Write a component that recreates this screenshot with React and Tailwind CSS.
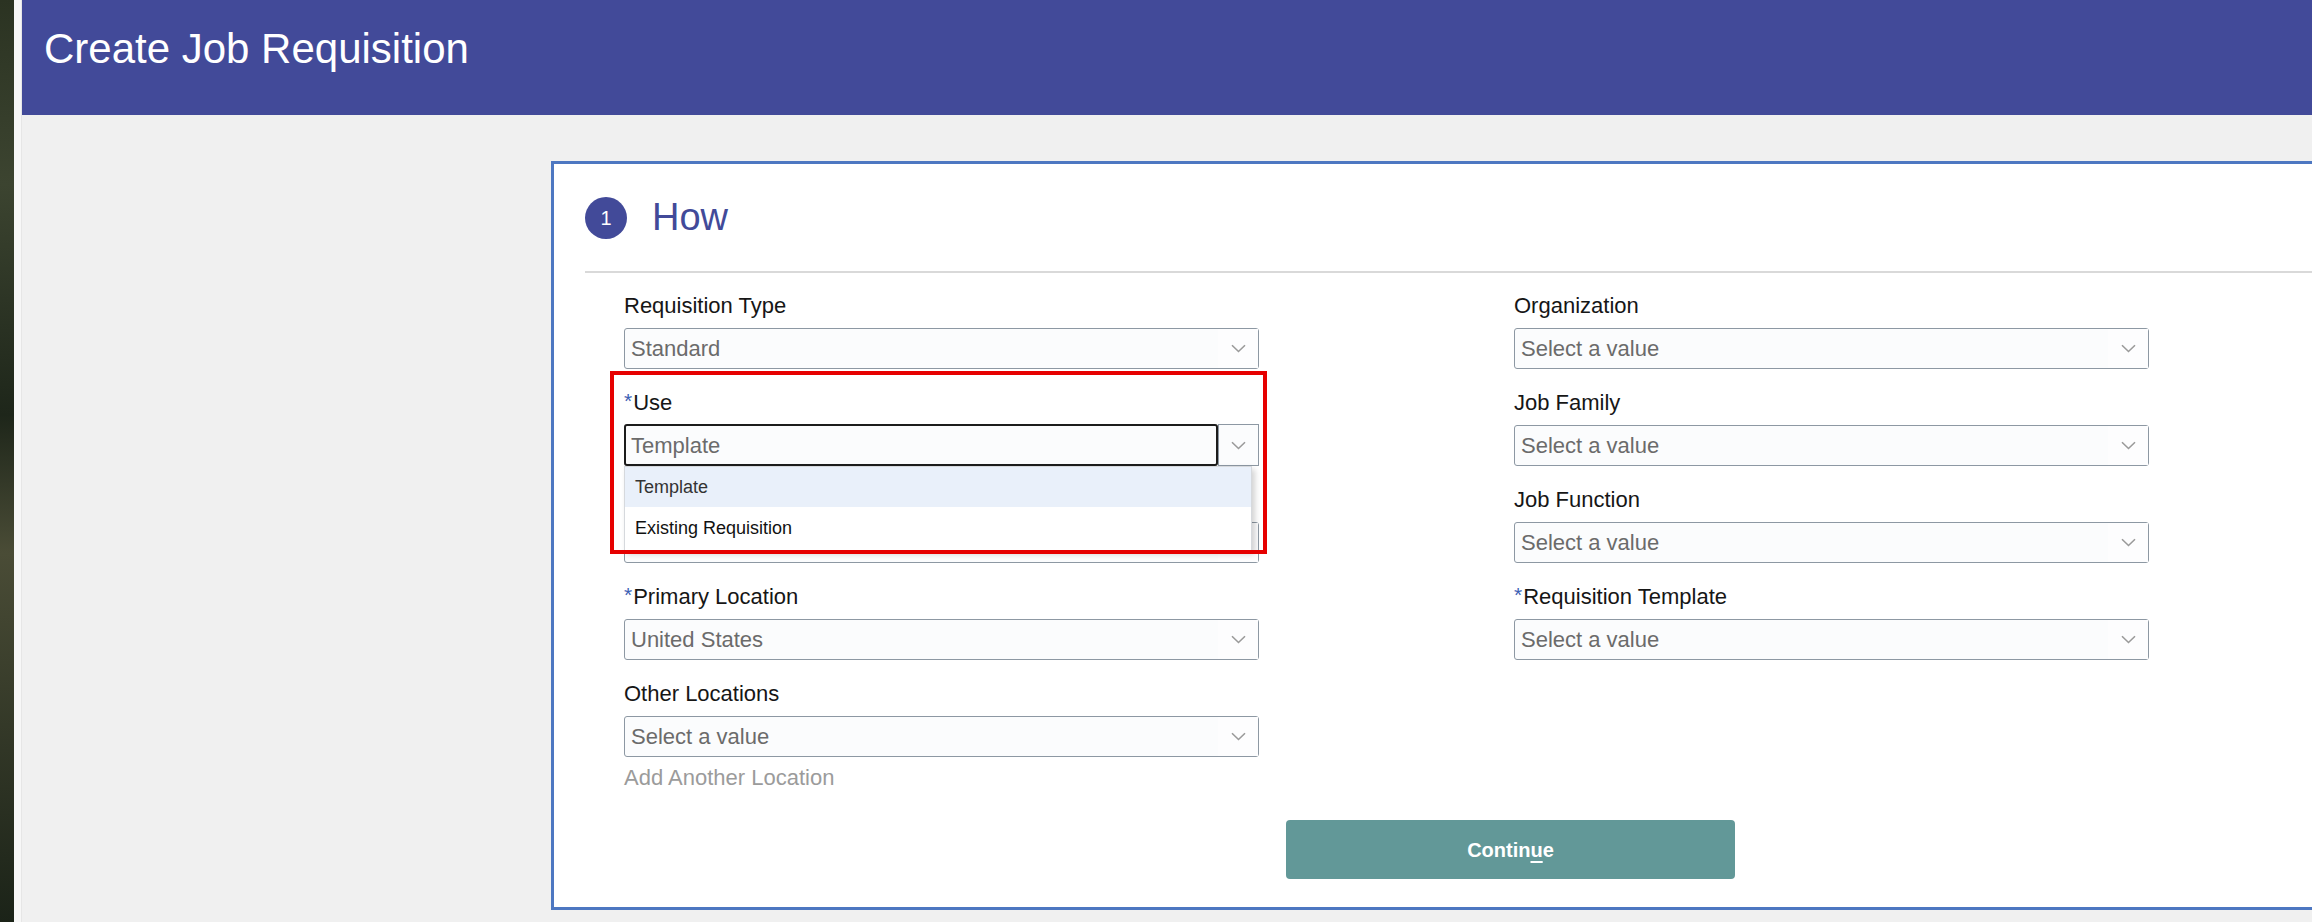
import React from "react";

const FONT = { fontFamily: '"Liberation Sans", Arial, sans-serif' };

function Chevron() {
  return (
    <svg width="15" height="9" viewBox="0 0 15 9" fill="none">
      <path d="M1 1.2L7.5 7.5L14 1.2" stroke="#9a9a9a" strokeWidth="1.6" />
    </svg>
  );
}

function Label({ text, required }) {
  return (
    <div className="h-[28px] flex items-center text-[22px] text-[#161616] leading-none">
      {required && <span className="text-[#3d5fb4] text-[21px] self-start mt-[1px] mr-[1px]">*</span>}
      {text}
    </div>
  );
}

function Select({ value }) {
  return (
    <div className="mt-[8px] h-[41px] w-[635px] flex items-center justify-between border border-[#8d98a3] rounded-[3px] bg-[#fbfcfd]">
      <span className="pl-[6px] text-[22px] text-[#6b6b6b]">{value}</span>
      <span className="h-full w-[40px] flex items-center justify-center bg-[#fdfdfe]">
        <Chevron />
      </span>
    </div>
  );
}

function Field({ label, required, value }) {
  return (
    <div className="flex flex-col">
      <Label text={label} required={required} />
      <Select value={value} />
    </div>
  );
}

function UseField() {
  return (
    <div className="relative flex flex-col">
      <Label text="Use" required />
      <div className="mt-[7px] h-[42px] w-[635px] flex">
        <div className="flex-1 flex items-center border-2 border-[#1c1c1c] rounded-[3px] bg-[#fbfcfd]">
          <span className="pl-[5px] text-[22px] text-[#6b6b6b]">Template</span>
        </div>
        <div className="w-[41px] flex items-center justify-center border border-[#8d98a3] bg-[#fbfcfd]">
          <Chevron />
        </div>
      </div>
      {/* open list */}
      <div className="absolute left-0 top-[77px] w-[628px] z-20 bg-white border border-[#d6d9dd] shadow-[3px_3px_6px_rgba(0,0,0,0.18)]">
        <div className="h-[40px] flex items-center pl-[10px] bg-[#e9f0fa] text-[18px] text-[#333]">Template</div>
        <div className="h-[43px] flex items-center pl-[10px] text-[18px] text-[#111]">Existing Requisition</div>
      </div>
      {/* annotation */}
      <div className="absolute left-[-14px] top-[-18px] w-[657px] h-[183px] border-4 border-[#e60000] z-30 pointer-events-none" />
    </div>
  );
}

export default function App() {
  return (
    <div className="flex w-[2312px] h-[922px] overflow-hidden bg-[#f0f0f0]" style={FONT}>
      <div className="w-[14px] shrink-0 bg-[linear-gradient(180deg,#2b3322_0%,#3c4430_20%,#1e261a_45%,#4a4c36_60%,#1b2318_100%)]" />
      <div className="w-[8px] shrink-0 bg-[#f7f7f7] border-r border-[#e6e6e6]" />
      <div className="flex-1 flex flex-col min-w-0">
        <div className="h-[115px] shrink-0 bg-[#424a99] pl-[22px] pt-[21px]">
          <h1 className="text-[42px] leading-[56px] text-white">Create Job Requisition</h1>
        </div>
        <div className="flex-1 pl-[529px] pt-[46px]">
          <div className="h-[749px] bg-white border-[3px] border-r-0 border-[#4d77c1] flex flex-col">
            <div className="ml-[31px] h-[109px] shrink-0 flex items-center border-b-2 border-[#d9d9d9]">
              <div className="w-[42px] h-[42px] rounded-full bg-[#424a99] flex items-center justify-center text-white text-[20px]">1</div>
              <div className="ml-[25px] text-[38px] text-[#424a99]">How</div>
            </div>
            <div className="pl-[70px] pt-[19px] flex gap-[255px]">
              <div className="flex flex-col gap-[20px]">
                <Field label="Requisition Type" value="Standard" />
                <UseField />
                <Field label="" value="" />
                <Field label="Primary Location" required value="United States" />
                <div className="flex flex-col">
                  <Field label="Other Locations" value="Select a value" />
                  <div className="mt-[6px] h-[28px] flex items-center text-[22px] text-[#9b9b9b]">Add Another Location</div>
                </div>
              </div>
              <div className="flex flex-col gap-[20px]">
                <Field label="Organization" value="Select a value" />
                <Field label="Job Family" value="Select a value" />
                <Field label="Job Function" value="Select a value" />
                <Field label="Requisition Template" required value="Select a value" />
              </div>
            </div>
            <div className="pl-[732px] pt-[29px]">
              <button className="w-[449px] h-[59px] rounded-[4px] bg-[#629898] text-white text-[20px] font-semibold">
                Contin<span className="underline underline-offset-4">u</span>e
              </button>
            </div>
          </div>
        </div>
      </div>
    </div>
  );
}
